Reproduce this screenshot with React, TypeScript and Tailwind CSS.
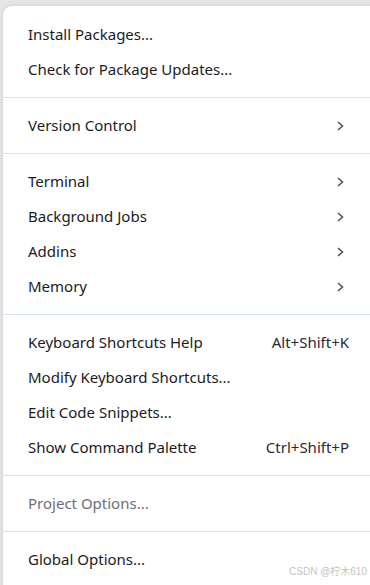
import React from "react";

type Item = { label: string; sub?: boolean; shortcut?: string; disabled?: boolean };

const groups: Item[][] = [
  [{ label: "Install Packages..." }, { label: "Check for Package Updates..." }],
  [{ label: "Version Control", sub: true }],
  [
    { label: "Terminal", sub: true },
    { label: "Background Jobs", sub: true },
    { label: "Addins", sub: true },
    { label: "Memory", sub: true },
  ],
  [
    { label: "Keyboard Shortcuts Help", shortcut: "Alt+Shift+K" },
    { label: "Modify Keyboard Shortcuts..." },
    { label: "Edit Code Snippets..." },
    { label: "Show Command Palette", shortcut: "Ctrl+Shift+P" },
  ],
  [{ label: "Project Options...", disabled: true }],
  [{ label: "Global Options..." }],
];

function Chevron() {
  return (
    <svg width="10" height="12" viewBox="0 0 10 12" className="text-[#555]">
      <path d="M3 2 L7.5 6 L3 10" fill="none" stroke="currentColor" strokeWidth="1.6" />
    </svg>
  );
}

export default function App() {
  return (
    <div
      className="relative w-[370px] h-[585px] overflow-hidden bg-[#e6e6e6]"
      style={{ fontFamily: "'Noto Sans', 'Open Sans', sans-serif" }}
    >
      <div className="absolute left-[3px] top-[6px] w-[380px] h-[600px] bg-white rounded-[9px] shadow-[0_0_4px_rgba(0,0,0,0.12)] pt-[11px]">
        {groups.map((g, gi) => (
          <div key={gi}>
            {gi > 0 && <div className="h-px bg-[#d5e2f4] my-[10px]" />}
            {g.map((it) => (
              <div
                key={it.label}
                className="h-[35px] flex items-center pl-[25px] pr-[34px] text-[15px]"
              >
                <span className={it.disabled ? "text-[#6e6e78]" : "text-[#1b1b24]"}>
                  {it.label}
                </span>
                <span className="flex-1" />
                {it.shortcut && <span className="text-[#2a2a33]">{it.shortcut}</span>}
                {it.sub && (
                  <span className="mr-[4px] flex items-center">
                    <Chevron />
                  </span>
                )}
              </div>
            ))}
          </div>
        ))}
      </div>
      <div
        className="absolute right-[3px] bottom-[6px] text-[10px] text-[#c4c4c4]"
        style={{ fontFamily: "'Liberation Sans', 'Noto Sans CJK SC', sans-serif" }}
      >
        CSDN @柠木610
      </div>
    </div>
  );
}
